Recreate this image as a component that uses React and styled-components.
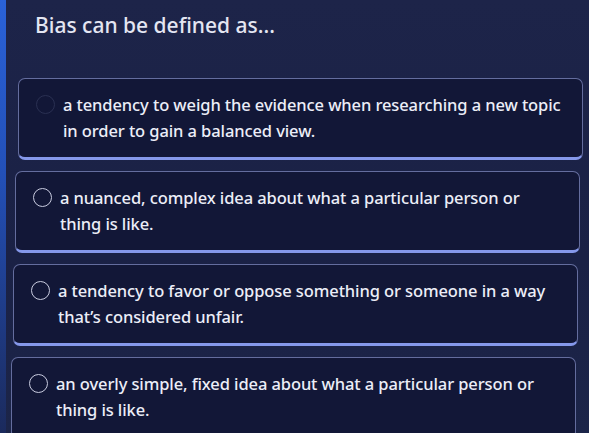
import React from "react";
import styled, { createGlobalStyle } from "styled-components";

const Global = createGlobalStyle`
  html, body { margin: 0; padding: 0; }
  body {
    width: 589px; height: 433px; overflow: hidden;
    background: #1b2246;
    font-family: "Noto Sans", "Open Sans", sans-serif;
  }
`;

const Page = styled.div`
  position: relative;
  width: 589px;
  height: 433px;
  box-sizing: border-box;
  padding: 8px 8px 0 14px;
  background: linear-gradient(180deg, #1d2449 0%, #1a2145 60%, #1c2549 100%);
  overflow: hidden;
  &::before {
    content: "";
    position: absolute;
    left: 0; top: 0; bottom: 0;
    width: 6px;
    background: linear-gradient(180deg, #2a62d8 0%, #2350b8 40%, #1b2a5c 100%);
  }
`;

const Title = styled.h1`
  margin: 0 0 0 21px;
  font-size: 21px;
  font-weight: 500;
  line-height: 34px;
  color: #e4e6f2;
`;

const List = styled.div`
  display: flex;
  flex-direction: column;
  gap: 11px;
  margin-top: 36px;
`;

const Card = styled.div`
  display: flex;
  align-items: flex-start;
  gap: 8px;
  height: 82px;
  box-sizing: border-box;
  padding: 13px 4px 0 17px;
  margin-left: ${p => p.$shift}px;
  margin-right: ${p => 2 - p.$shift}px;
  background: #121737;
  border: 1.5px solid #646d9e;
  border-bottom: 3px solid #8598ea;
  border-radius: 7px;
`;

const Radio = styled.span`
  flex: none;
  width: 19px;
  height: 19px;
  margin-top: 3px;
  border-radius: 50%;
  border: 1.5px solid ${p => (p.$dim ? "#2a3052" : "#c9cce0")};
  box-sizing: border-box;
`;

const Text = styled.p`
  margin: 0;
  max-width: 500px;
  font-size: 16.5px;
  font-weight: 500;
  line-height: 26px;
  letter-spacing: -0.1px;
  color: #eceef8;
`;

const options = [
  { text: "a tendency to weigh the evidence when researching a new topic in order to gain a balanced view.", dim: true, shift: 4 },
  { text: "a nuanced, complex idea about what a particular person or thing is like.", dim: false, shift: 1 },
  { text: "a tendency to favor or oppose something or someone in a way that’s considered unfair.", dim: false, shift: -1 },
  { text: "an overly simple, fixed idea about what a particular person or thing is like.", dim: false, shift: -3 },
];

export default function App() {
  return (
    <Page>
      <Global />
      <Title>Bias can be defined as...</Title>
      <List>
        {options.map((o, i) => (
          <Card key={i} $shift={o.shift}>
            <Radio $dim={o.dim} />
            <Text>{o.text}</Text>
          </Card>
        ))}
      </List>
    </Page>
  );
}
